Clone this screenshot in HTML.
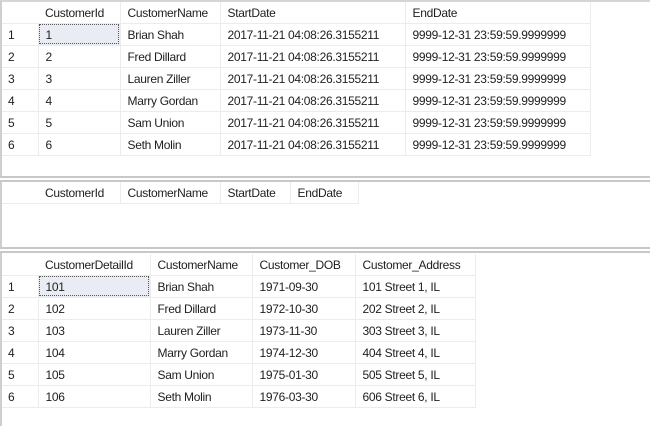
<!DOCTYPE html>
<html><head><meta charset="utf-8"><style>
*{margin:0;padding:0;box-sizing:border-box}
body{width:650px;height:426px;background:#fff;position:relative;overflow:hidden;font-family:"Liberation Sans",sans-serif;font-size:12px;color:#1e1e1e;letter-spacing:-0.3px}
.pane{position:absolute;left:0;width:650px;border-left:2px solid #cfcfcf}
.sep{position:absolute;left:0;width:650px;height:6px;border-top:2px solid #c8c8c8;border-bottom:2px solid #c8c8c8;background:#fff}
table{position:absolute;left:2px;border-collapse:collapse;table-layout:fixed}
td{height:22px;padding:2px 0 0 7px;white-space:nowrap;overflow:hidden;border-right:1px solid #ececec;border-bottom:1px solid #ececec}
tr.h td{height:21px;border-bottom:1px solid #ececec}
td.r{border-right:1px solid #ececec;padding-left:6px}
tr.h td.r{border-right:none}
.sel{background:#e9edf3;outline:1px dotted #555;outline-offset:-2px}
</style></head><body>
<div class="pane" style="top:0;height:177px;border-top:2px solid #d6d6d6"></div>
<table style="top:2px">
<colgroup><col style="width:36px"><col style="width:82px"><col style="width:100px"><col style="width:185px"><col style="width:185px"></colgroup>
<tr class="h"><td class="r"></td><td>CustomerId</td><td>CustomerName</td><td>StartDate</td><td>EndDate</td></tr>
<tr><td class="r">1</td><td class="sel">1</td><td>Brian Shah</td><td>2017-11-21 04:08:26.3155211</td><td>9999-12-31 23:59:59.9999999</td></tr>
<tr><td class="r">2</td><td>2</td><td>Fred Dillard</td><td>2017-11-21 04:08:26.3155211</td><td>9999-12-31 23:59:59.9999999</td></tr>
<tr><td class="r">3</td><td>3</td><td>Lauren Ziller</td><td>2017-11-21 04:08:26.3155211</td><td>9999-12-31 23:59:59.9999999</td></tr>
<tr><td class="r">4</td><td>4</td><td>Marry Gordan</td><td>2017-11-21 04:08:26.3155211</td><td>9999-12-31 23:59:59.9999999</td></tr>
<tr><td class="r">5</td><td>5</td><td>Sam Union</td><td>2017-11-21 04:08:26.3155211</td><td>9999-12-31 23:59:59.9999999</td></tr>
<tr><td class="r">6</td><td>6</td><td>Seth Molin</td><td>2017-11-21 04:08:26.3155211</td><td>9999-12-31 23:59:59.9999999</td></tr>
</table>
<div class="sep" style="top:176px"></div>
<div class="pane" style="top:182px;height:66px"></div>
<table style="top:182px">
<colgroup><col style="width:36px"><col style="width:82px"><col style="width:100px"><col style="width:70px"><col style="width:68px"></colgroup>
<tr class="h"><td class="r"></td><td>CustomerId</td><td>CustomerName</td><td>StartDate</td><td>EndDate</td></tr>
</table>
<div class="sep" style="top:247px"></div>
<div class="pane" style="top:253px;height:173px"></div>
<table style="top:254px">
<colgroup><col style="width:36px"><col style="width:112px"><col style="width:102px"><col style="width:103px"><col style="width:120px"></colgroup>
<tr class="h"><td class="r"></td><td>CustomerDetailId</td><td>CustomerName</td><td>Customer_DOB</td><td>Customer_Address</td></tr>
<tr><td class="r">1</td><td class="sel">101</td><td>Brian Shah</td><td>1971-09-30</td><td>101 Street 1, IL</td></tr>
<tr><td class="r">2</td><td>102</td><td>Fred Dillard</td><td>1972-10-30</td><td>202 Street 2, IL</td></tr>
<tr><td class="r">3</td><td>103</td><td>Lauren Ziller</td><td>1973-11-30</td><td>303 Street 3, IL</td></tr>
<tr><td class="r">4</td><td>104</td><td>Marry Gordan</td><td>1974-12-30</td><td>404 Street 4, IL</td></tr>
<tr><td class="r">5</td><td>105</td><td>Sam Union</td><td>1975-01-30</td><td>505 Street 5, IL</td></tr>
<tr><td class="r">6</td><td>106</td><td>Seth Molin</td><td>1976-03-30</td><td>606 Street 6, IL</td></tr>
</table>
</body></html>
